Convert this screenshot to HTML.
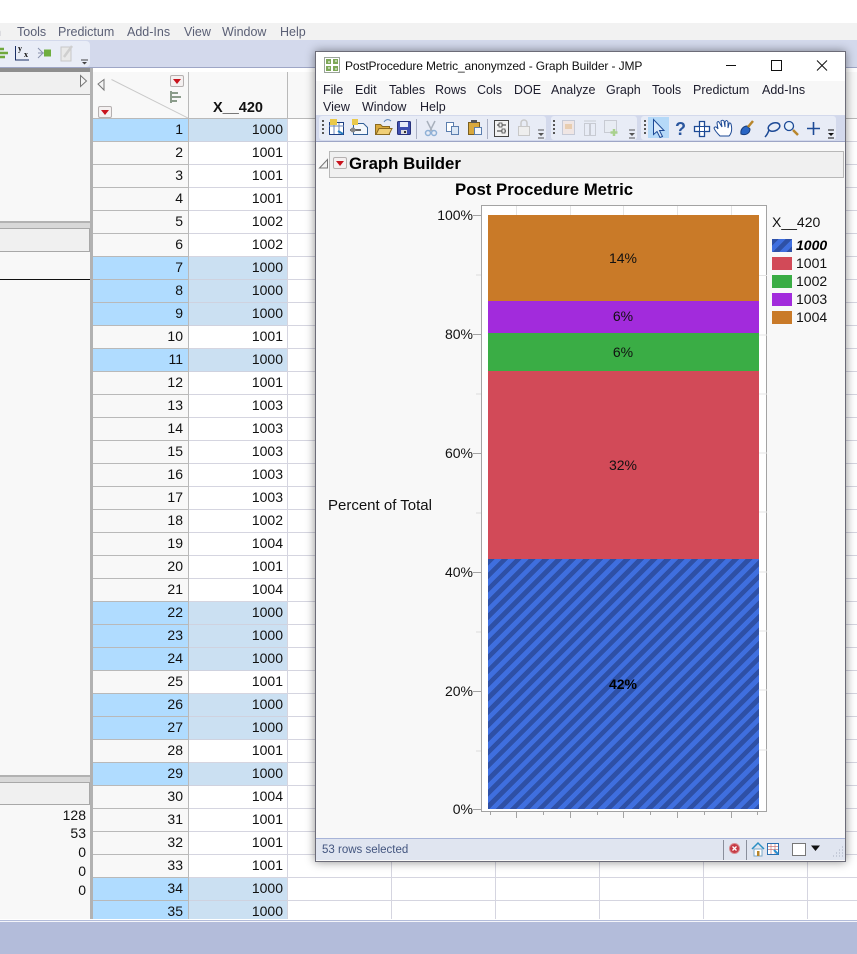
<!DOCTYPE html>
<html><head><meta charset="utf-8"><style>
html,body{margin:0;padding:0;background:#fff}
#p{position:relative;width:857px;height:954px;overflow:hidden;background:#fff;font:14px "Liberation Sans",sans-serif;color:#111}
#p div,#p span.a{position:absolute}
.t{white-space:nowrap}
.m{white-space:nowrap;font-size:12.5px;color:#1c1c2c;line-height:16px}
.g{white-space:nowrap;font-size:12.5px;color:#5a5f75;line-height:16px;top:24px}
#rows{left:93px;top:119px;width:194px;height:800px;overflow:hidden}
.r{position:relative;height:23px;width:194px}
#p .r b{position:absolute;font-weight:400;left:0;top:0;width:95px;height:22px;background:#f8f8f8;border-bottom:1px solid #b9b9b9;text-align:right;line-height:22px;box-sizing:content-box}
#p .r i{position:absolute;font-style:normal;left:96px;top:0;width:98px;height:22px;background:#fff;border-bottom:1px solid #d5d5e0;text-align:right;line-height:22px}
#p .r b u,#p .r i u{text-decoration:none;position:absolute;right:5px;top:-1px}
#p .r i u{right:4px}
#p .s b{background:#b0dcff}
#p .s i{background:#cbe0f2;border-bottom-color:#cfd2df}
.rb{width:12px;height:10px;background:#f4f0f0;border:1px solid #b5b0b0;border-radius:2px}
.rb:after{content:"";position:absolute;left:2px;top:3px;border-left:4px solid transparent;border-right:4px solid transparent;border-top:5px solid #c8121c}
.y{left:420px;width:53px;text-align:right;line-height:16px}
.l{width:60px;text-align:center;line-height:16px}
.sw{left:772px;width:20px;height:13px}
.lg{left:796px;line-height:16px}
</style></head><body><div id="p">

<!-- app chrome -->
<div style="left:0;top:23px;width:857px;height:17px;background:#f2f2f2"></div>
<div class="g" style="left:-6px">n</div><div class="g" style="left:17px">Tools</div><div class="g" style="left:58px">Predictum</div><div class="g" style="left:127px">Add-Ins</div><div class="g" style="left:184px">View</div><div class="g" style="left:222px">Window</div><div class="g" style="left:280px">Help</div>
<div style="left:0;top:40px;width:857px;height:27px;background:#d3d9ec"></div>
<div style="left:0;top:41px;width:90px;height:26px;background:#e9edf7;border-radius:0 4px 4px 0"></div>
<div style="left:0;top:67px;width:857px;height:1px;background:#9ea6c6"></div>
<svg style="position:absolute;left:0;top:42px" width="92" height="24" viewBox="0 0 92 24">
<path d="M0 7h4M0 11h8M0 15h5" stroke="#6fa83c" stroke-width="2.5" fill="none"/>
<path d="M15.500 4v14h13.500" stroke="#1b2f66" stroke-width="1" fill="none"/>
<text x="18" y="9" font-family="Liberation Serif" font-size="8" font-weight="700" fill="#111">y</text><text x="24" y="15" font-family="Liberation Serif" font-size="8" font-weight="700" fill="#111">x</text>
<path d="M38 6l5 5-5 5M38 11h6" stroke="#8a93ad" fill="none"/><rect x="44" y="7.500" width="7" height="7" fill="#6fae3f"/>
<path d="M61 5h10v14H61z" fill="#e9e9e9" stroke="#c8c8c8"/><path d="M64 15l8-11" stroke="#cfcfcf" stroke-width="2.500"/>
<path d="M81 18h7" stroke="#444"/><path d="M82 20h5l-2.500 2.500z" fill="#444"/>
</svg>

<!-- left panel -->
<div style="left:0;top:68px;width:90px;height:851px;background:#f8f8f8"></div>
<div style="left:0;top:68px;width:93px;height:4px;background:#8e8e8e"></div>
<div style="left:90px;top:68px;width:3px;height:851px;background:#b2b2b2"></div>
<div style="left:0;top:72px;width:90px;height:22px;background:#f0f0f0;border-bottom:1px solid #a8a8a8"></div>
<svg style="position:absolute;left:79px;top:74px" width="10" height="14"><path d="M1.500 1.500l6 5.500-6 5.500z" fill="#f4f4f4" stroke="#777"/></svg>
<div style="left:0;top:221px;width:90px;height:2px;background:#b2b2b2"></div>
<div style="left:0;top:223px;width:90px;height:5px;background:#d8d8d8"></div>
<div style="left:0;top:228px;width:89px;height:22px;background:#f0f0f0;border:1px solid #a8a8a8;border-left:0"></div>
<div style="left:0;top:279px;width:90px;height:1px;background:#111"></div>
<div style="left:0;top:775px;width:90px;height:2px;background:#b2b2b2"></div>
<div style="left:0;top:777px;width:90px;height:5px;background:#d8d8d8"></div>
<div style="left:0;top:782px;width:89px;height:21px;background:#f0f0f0;border:1px solid #a8a8a8;border-left:0"></div>
<div class="t" style="right:771px;top:807px;line-height:16px">128</div>
<div class="t" style="right:771px;top:825px;line-height:16px">53</div>
<div class="t" style="right:771px;top:844px;line-height:16px">0</div>
<div class="t" style="right:771px;top:863px;line-height:16px">0</div>
<div class="t" style="right:771px;top:882px;line-height:16px">0</div>

<!-- grid header -->
<div style="left:93px;top:72px;width:764px;height:46px;background:#f8f8f8"></div>
<div style="left:93px;top:118px;width:764px;height:1px;background:#b9b9b9"></div>
<div style="left:188px;top:72px;width:1px;height:847px;background:#b9b9b9;z-index:2"></div>
<div style="left:287px;top:72px;width:1px;height:847px;background:#b9b9b9"></div>
<div style="left:391px;top:72px;width:1px;height:847px;background:#b9b9b9"></div>
<div style="left:495px;top:72px;width:1px;height:847px;background:#b9b9b9"></div>
<div style="left:599px;top:72px;width:1px;height:847px;background:#b9b9b9"></div>
<div style="left:703px;top:72px;width:1px;height:847px;background:#b9b9b9"></div>
<div style="left:807px;top:72px;width:1px;height:847px;background:#b9b9b9"></div>
<svg style="position:absolute;left:93px;top:72px" width="95" height="46">
<path d="M11 7.500L5 12l6 6z" fill="#f4f4f4" stroke="#777"/>
<path d="M18.500 7.500L95 46" stroke="#c9c9c9"/>
<path d="M77 19h2v12h-2z" fill="#8b9c8b"/><path d="M79 20h6v2h-6zM79 24h9v2h-9zM79 28h5v2h-5z" fill="#8b9c8b"/>
</svg>
<div class="rb" style="left:170px;top:75px"></div>
<div class="rb" style="left:98px;top:106px"></div>
<div class="t" style="left:213px;top:99px;font-weight:700;font-size:14.500px;line-height:18px">X__420</div>

<!-- right empty grid -->
<div style="left:288px;top:119px;width:569px;height:800px;background:repeating-linear-gradient(to bottom,#fff 0,#fff 22px,#d5d5e0 22px,#d5d5e0 23px)"></div>
<div style="left:287px;top:119px;width:1px;height:800px;background:#d5d5e0"></div>
<div style="left:391px;top:119px;width:1px;height:800px;background:#d5d5e0"></div>
<div style="left:495px;top:119px;width:1px;height:800px;background:#d5d5e0"></div>
<div style="left:599px;top:119px;width:1px;height:800px;background:#d5d5e0"></div>
<div style="left:703px;top:119px;width:1px;height:800px;background:#d5d5e0"></div>
<div style="left:807px;top:119px;width:1px;height:800px;background:#d5d5e0"></div>

<!-- rows -->
<div id="rows">
<section class="r s"><b><u>1</u></b><i><u>1000</u></i></section>
<section class="r"><b><u>2</u></b><i><u>1001</u></i></section>
<section class="r"><b><u>3</u></b><i><u>1001</u></i></section>
<section class="r"><b><u>4</u></b><i><u>1001</u></i></section>
<section class="r"><b><u>5</u></b><i><u>1002</u></i></section>
<section class="r"><b><u>6</u></b><i><u>1002</u></i></section>
<section class="r s"><b><u>7</u></b><i><u>1000</u></i></section>
<section class="r s"><b><u>8</u></b><i><u>1000</u></i></section>
<section class="r s"><b><u>9</u></b><i><u>1000</u></i></section>
<section class="r"><b><u>10</u></b><i><u>1001</u></i></section>
<section class="r s"><b><u>11</u></b><i><u>1000</u></i></section>
<section class="r"><b><u>12</u></b><i><u>1001</u></i></section>
<section class="r"><b><u>13</u></b><i><u>1003</u></i></section>
<section class="r"><b><u>14</u></b><i><u>1003</u></i></section>
<section class="r"><b><u>15</u></b><i><u>1003</u></i></section>
<section class="r"><b><u>16</u></b><i><u>1003</u></i></section>
<section class="r"><b><u>17</u></b><i><u>1003</u></i></section>
<section class="r"><b><u>18</u></b><i><u>1002</u></i></section>
<section class="r"><b><u>19</u></b><i><u>1004</u></i></section>
<section class="r"><b><u>20</u></b><i><u>1001</u></i></section>
<section class="r"><b><u>21</u></b><i><u>1004</u></i></section>
<section class="r s"><b><u>22</u></b><i><u>1000</u></i></section>
<section class="r s"><b><u>23</u></b><i><u>1000</u></i></section>
<section class="r s"><b><u>24</u></b><i><u>1000</u></i></section>
<section class="r"><b><u>25</u></b><i><u>1001</u></i></section>
<section class="r s"><b><u>26</u></b><i><u>1000</u></i></section>
<section class="r s"><b><u>27</u></b><i><u>1000</u></i></section>
<section class="r"><b><u>28</u></b><i><u>1001</u></i></section>
<section class="r s"><b><u>29</u></b><i><u>1000</u></i></section>
<section class="r"><b><u>30</u></b><i><u>1004</u></i></section>
<section class="r"><b><u>31</u></b><i><u>1001</u></i></section>
<section class="r"><b><u>32</u></b><i><u>1001</u></i></section>
<section class="r"><b><u>33</u></b><i><u>1001</u></i></section>
<section class="r s"><b><u>34</u></b><i><u>1000</u></i></section>
<section class="r s"><b><u>35</u></b><i><u>1000</u></i></section>
</div>

<!-- bottom -->
<div style="left:0;top:919px;width:857px;height:1px;background:#fff"></div>
<div style="left:0;top:920px;width:857px;height:1px;background:#b3bcda"></div>
<div style="left:0;top:921px;width:857px;height:1px;background:#f4f5fa"></div>
<div style="left:0;top:922px;width:857px;height:32px;background:#b3bcda"></div>

<!-- window -->
<div style="left:315px;top:51px;width:529px;height:809px;background:#f8f8f8;border:1px solid #6c6c78;box-shadow:0 0 9px rgba(0,0,0,.45)"></div>
<div style="left:316px;top:52px;width:529px;height:63px;background:#fff"></div>
<div style="left:316px;top:81px;width:529px;height:34px;background:#f7f7f7"></div>
<svg style="position:absolute;left:324px;top:57px" width="16" height="16"><rect x=".5" y=".5" width="15" height="15" fill="#fff" stroke="#9aa39a"/><path d="M2 2h5v5H2zM9 2h5v5H9zM2 9h5v5H2zM9 9h5v5H9z" fill="#7ea858"/><path d="M4 5h2M11 4h2M4 11h2M11 12h2" stroke="#fff"/></svg>
<div class="t" style="left:345px;top:58px;font-size:12px;letter-spacing:-.12px;line-height:16px;color:#111">PostProcedure Metric_anonymzed - Graph Builder - JMP</div>
<svg style="position:absolute;left:720px;top:55px" width="115" height="22" fill="none" stroke="#111"><path d="M6 10.500h10"/><rect x="51.500" y="5.500" width="10" height="10"/><path d="M97 5.500l10 10M107 5.500l-10 10"/></svg>
<div class="m" style="left:323px;top:82px">File</div><div class="m" style="left:355px;top:82px">Edit</div><div class="m" style="left:389px;top:82px">Tables</div><div class="m" style="left:435px;top:82px">Rows</div><div class="m" style="left:477px;top:82px">Cols</div><div class="m" style="left:514px;top:82px">DOE</div><div class="m" style="left:551px;top:82px">Analyze</div><div class="m" style="left:606px;top:82px">Graph</div><div class="m" style="left:652px;top:82px">Tools</div><div class="m" style="left:693px;top:82px">Predictum</div><div class="m" style="left:762px;top:82px">Add-Ins</div>
<div class="m" style="left:323px;top:99px">View</div><div class="m" style="left:362px;top:99px">Window</div><div class="m" style="left:420px;top:99px">Help</div>

<!-- window toolbar -->
<div style="left:316px;top:115px;width:529px;height:27px;background:#d3d9ec;border-bottom:1px solid #9ea6c6;box-sizing:border-box"></div>
<div style="left:319px;top:116px;width:227px;height:24px;background:#e8ecf6;border-radius:3px"></div>
<div style="left:551px;top:116px;width:86px;height:24px;background:#e8ecf6;border-radius:3px"></div>
<div style="left:641px;top:116px;width:195px;height:24px;background:#e8ecf6;border-radius:3px"></div>
<div style="left:648px;top:117px;width:21px;height:21px;background:#b5d9f8"></div>
<svg style="position:absolute;left:316px;top:115px" width="529" height="27" fill="none">
<path d="M7 5v2M7 9v2M7 13v2M7 17v2M238 5v2M238 9v2M238 13v2M238 17v2M329 5v2M329 9v2M329 13v2M329 17v2" stroke="#555" stroke-width="2"/>
<!-- grid icon -->
<rect x="13.500" y="7.500" width="14" height="12" fill="#fff" stroke="#1d3f84"/><path d="M13 11h15M18 8v11M23 8v11" stroke="#6b86b8"/><rect x="14" y="4" width="7" height="6" fill="#eac94a"/><path d="M22 16l5 3" stroke="#2a7fc0" stroke-width="2"/>
<!-- new script -->
<path d="M37.500 8.500h10l4 4v7h-14z" fill="#f3f7fb" stroke="#315f96"/><rect x="36" y="4" width="6" height="6" fill="#eac94a"/><path d="M34 15h11" stroke="#666" stroke-width="2"/><circle cx="37" cy="15" r="2.500" fill="#888"/>
<!-- open -->
<path d="M59.500 9.500h5l2 2h7v8h-14z" fill="#d9a93d" stroke="#8a6a22"/><path d="M60 19.500l3-6h13l-3 6z" fill="#f0cf77" stroke="#8a6a22"/><path d="M68 7c2-3 5-3 7-1" stroke="#5b84b5"/>
<!-- save -->
<rect x="81.500" y="6.500" width="13" height="13" rx="1" fill="#3f4fb0" stroke="#26307a"/><rect x="84" y="7" width="8" height="5" fill="#e9ecf8"/><rect x="85" y="15" width="6" height="4" fill="#ddd"/><rect x="88" y="16" width="2" height="2" fill="#333"/>
<path d="M100.500 4v20M171.500 4v20" stroke="#aab0c4"/>
<!-- cut -->
<path d="M111 6l5 10M119 6l-5 10" stroke="#a8b0bc" stroke-width="1.500"/><circle cx="112" cy="18" r="2.500" stroke="#8eb0d6" stroke-width="1.500"/><circle cx="118" cy="18" r="2.500" stroke="#8eb0d6" stroke-width="1.500"/>
<!-- copy -->
<path d="M130.500 7.500h7v9h-7z" fill="#fff" stroke="#5b7eae"/><path d="M135.500 11.500h7v8h-7z" fill="#dbe7f5" stroke="#5b7eae"/>
<!-- paste -->
<rect x="152.500" y="7.500" width="11" height="12" fill="#d9a93d" stroke="#7a5f20"/><rect x="155" y="5" width="6" height="3" fill="#555"/><path d="M158.500 12.500h7v7h-7z" fill="#f4f7fb" stroke="#5b7eae"/>
<!-- settings -->
<rect x="178.500" y="5.500" width="14" height="16" fill="#f2f2f2" stroke="#444"/><path d="M181 10h9M181 16h9" stroke="#333"/><rect x="183" y="8" width="3" height="4" fill="#eee" stroke="#333" stroke-width=".7"/><rect x="186" y="14" width="3" height="4" fill="#eee" stroke="#333" stroke-width=".7"/>
<!-- lock -->
<rect x="202.500" y="11.500" width="11" height="9" fill="#eee" stroke="#c8c8c8"/><path d="M205 11V8c0-4 6-4 6 0v3" stroke="#c8c8c8" stroke-width="1.500"/>
<path d="M222 15h6M222 23h6" stroke="#555"/><path d="M222 18h6l-3 3z" fill="#555"/>
<!-- disabled -->
<rect x="246.500" y="5.500" width="12" height="14" fill="#f0e6e4" stroke="#c6cad6"/><rect x="249" y="9" width="7" height="5" fill="#e8cdb0"/>
<path d="M268.500 8.500h5v12h-5zM274.500 8.500h5v12h-5zM268 6h12" stroke="#c8cbd3"/>
<rect x="288.500" y="5.500" width="12" height="12" fill="#e8ecf3" stroke="#c8cbd3"/><path d="M298 14v7M294.500 17.500h7" stroke="#a9d18e" stroke-width="2.500"/>
<path d="M313 15h6M313 23h6" stroke="#555"/><path d="M313 18h6l-3 3z" fill="#555"/>
<!-- arrow -->
<path d="M337.500 4.500v15l3.500-3 3 6 2.500-1-3-6h4.500z" fill="#dbeafa" stroke="#1d4a96"/>
<!-- ? -->
<text x="359" y="20" font-family="Liberation Sans" font-size="18" font-weight="700" fill="#2a569e">?</text>
<!-- crosshair box -->
<path d="M383.500 6.500h5v5h5v5h-5v5h-5v-5h-5v-5h5z" fill="#fff" stroke="#1d4a96" stroke-width="1.300"/><path d="M383.500 11.500h5v5h-5z" stroke="#1d4a96"/>
<!-- hand -->
<path d="M402 14c-1-2-3-3-4-1 1 3 4 6 6 8h9c3-3 3-8 2-12-1-2-2-1-2 0l-1 4 0-6c-1-2-2-2-3 0v5l-1-6c-1-1-2-1-3 0l1 6-3-5c-1-1-2 0-2 1z" fill="#fff" stroke="#1d4a96"/>
<!-- brush -->
<path d="M425 19c-1-5 3-8 6-8l3 3c0 4-4 7-9 5z" fill="#2a66c4" stroke="#173d7c"/><path d="M432 12l5-6" stroke="#b8862c" stroke-width="2.500"/>
<!-- lasso -->
<ellipse cx="458" cy="12" rx="6" ry="4" transform="rotate(-20 458 12)" stroke="#1d4a96" stroke-width="1.500"/><path d="M453 15c-1 3-2 5-4 7" stroke="#1d4a96" stroke-width="1.500"/>
<!-- magnifier -->
<circle cx="473" cy="11" r="4.500" fill="#e9f3fc" stroke="#1d4a96" stroke-width="1.300"/><path d="M477 15l5 5" stroke="#b8862c" stroke-width="2.500"/>
<!-- plus -->
<path d="M497.500 7v13M491 13.500h13" stroke="#1d4a96" stroke-width="1.600"/>
<path d="M512 15h6M512 23h6" stroke="#111"/><path d="M512 18h6l-3 3z" fill="#111"/>
</svg>

<!-- graph builder outline -->
<svg style="position:absolute;left:318px;top:158px" width="11" height="12"><path d="M9.500 1.500v8.500h-8z" fill="#f2f2f2" stroke="#777"/></svg>
<div style="left:329px;top:151px;width:513px;height:25px;background:#f0f0f0;border:1px solid #b8b8b8"></div>
<div class="rb" style="left:333px;top:157px"></div>
<div class="t" style="left:349px;top:154px;font-weight:700;font-size:16.800px;line-height:20px;color:#000">Graph Builder</div>
<div class="t" style="left:455px;top:180px;font-weight:700;font-size:16.800px;line-height:20px;color:#000">Post Procedure Metric</div>

<!-- plot -->
<div style="left:481px;top:205px;width:284px;height:605px;background:#fff;border:1px solid #a3a3a3"></div>
<svg style="position:absolute;left:465px;top:200px" width="310" height="625" fill="none">
<path d="M51.500 6v10M105.500 6v10M158.500 6v10M212.500 6v10M266.500 6v10M294 75.500h8M294 135h8M294 194h8M294 253h8M294 312h8M294 372h8M294 431h8M294 490h8M294 550h8" stroke="#e4e4e4"/>
<path d="M8 15.500h8M8 134.500h8M8 253.500h8M8 372.500h8M8 491.500h8M8 609.500h8" stroke="#a3a3a3"/>
<path d="M11 75h5M11 194h5M11 313h5M11 432h5M11 551h5" stroke="#dcdcdc"/>
<path d="M51.500 611v7M105.500 611v7M158.500 611v7M212.500 611v7M266.500 611v7" stroke="#a3a3a3"/>
<path d="M25.500 611v4M78.500 611v4M132.500 611v4M185.500 611v4M239.500 611v4M292.500 611v4" stroke="#a3a3a3"/>
</svg>
<div style="left:488px;top:215px;width:271px;height:86px;background:#c97a28"></div>
<div style="left:488px;top:301px;width:271px;height:32px;background:#a22bdc"></div>
<div style="left:488px;top:333px;width:271px;height:38px;background:#3aad45"></div>
<div style="left:488px;top:371px;width:271px;height:188px;background:#d24a58"></div>
<div style="left:488px;top:559px;width:271px;height:250px;background:repeating-linear-gradient(135deg,#2e50a6 0,#2e50a6 4.800px,#3f6fdf 4.800px,#3f6fdf 9.600px)"></div>
<div class="l" style="left:593px;top:250px">14%</div>
<div class="l" style="left:593px;top:308px">6%</div>
<div class="l" style="left:593px;top:344px">6%</div>
<div class="l" style="left:593px;top:457px">32%</div>
<div class="l" style="left:593px;top:676px;font-weight:700;color:#000">42%</div>
<div class="y" style="top:207px">100%</div>
<div class="y" style="top:326px">80%</div>
<div class="y" style="top:445px">60%</div>
<div class="y" style="top:564px">40%</div>
<div class="y" style="top:683px">20%</div>
<div class="y" style="top:801px">0%</div>
<div class="t" style="left:328px;top:498px;line-height:16px;font-size:15px">Percent of Total</div>

<!-- legend -->
<div class="t" style="left:772px;top:214px;line-height:16px">X__420</div>
<div class="sw" style="top:239px;background:repeating-linear-gradient(135deg,#2e50a6 0,#2e50a6 4.800px,#3f6fdf 4.800px,#3f6fdf 9.600px)"></div>
<div class="sw" style="top:257px;background:#d24a58"></div>
<div class="sw" style="top:275px;background:#3aad45"></div>
<div class="sw" style="top:293px;background:#a22bdc"></div>
<div class="sw" style="top:311px;background:#c97a28"></div>
<div class="lg" style="top:237px;font-weight:700;font-style:italic;color:#000">1000</div>
<div class="lg" style="top:255px">1001</div>
<div class="lg" style="top:273px">1002</div>
<div class="lg" style="top:291px">1003</div>
<div class="lg" style="top:309px">1004</div>

<!-- status bar -->
<div style="left:316px;top:838px;width:529px;height:22px;background:#e0e5f0;border-top:1px solid #a8b4d8;box-sizing:border-box"></div>
<div class="t" style="left:322px;top:843px;font-size:11.500px;line-height:14px;color:#43557f">53 rows selected</div>
<div style="left:723px;top:840px;width:1px;height:20px;background:#8a8f9c"></div>
<div style="left:746px;top:840px;width:1px;height:20px;background:#8a8f9c"></div>
<svg style="position:absolute;left:724px;top:839px" width="122" height="21" fill="none">
<circle cx="10.500" cy="9.500" r="5" fill="#c63a44" stroke="#d98a90"/><path d="M8.500 7.500l4 4M12.500 7.500l-4 4" stroke="#fff" stroke-width="1.300"/>
<path d="M28 10l6-6 6 6" stroke="#2a8fc4" stroke-width="1.500"/><path d="M30 10h8v7h-8z" fill="#fff" stroke="#7aa8c8"/><rect x="33" y="12" width="2.500" height="5" fill="#b8862c"/>
<rect x="43.500" y="4.500" width="11" height="11" fill="#fff" stroke="#2a6fb0"/><path d="M44 7.500h10M44 10.500h10M47 5v10M51 5v10" stroke="#c87a7a" stroke-width=".7"/><path d="M50 11l4 4" stroke="#2a8fd0" stroke-width="2"/>
<rect x="68.500" y="4.500" width="13" height="12" fill="#fff" stroke="#777"/>
<path d="M87 6.500h9l-4.500 5.500z" fill="#111"/>
<path d="M118 8h1M115 11h1M118 11h1M112 14h1M115 14h1M118 14h1M109 17h1M112 17h1M115 17h1M118 17h1" stroke="#a9afbf"/>
</svg>

</div></body></html>
